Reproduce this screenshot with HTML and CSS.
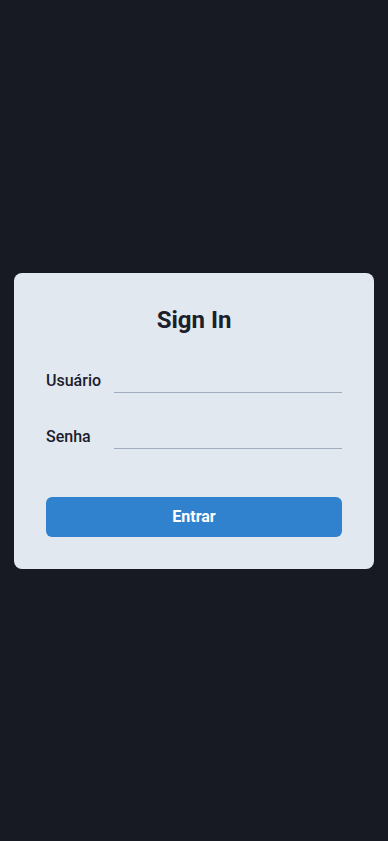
FILE: index.html
```html
<!DOCTYPE html>
<html lang="pt">
<head>
<meta charset="utf-8">
<title>Sign In</title>
<link rel="stylesheet" href="styles.css">
</head>
<body>
<main class="page">
  <form class="card">
    <h1 class="title">Sign In</h1>
    <div class="field">
      <label class="label" for="user">Usuário</label>
      <input class="input" id="user" type="text">
    </div>
    <div class="field">
      <label class="label" for="pass">Senha</label>
      <input class="input" id="pass" type="password">
    </div>
    <button class="button" type="button">Entrar</button>
  </form>
</main>
</body>
</html>
```
FILE: styles.css
```css
* { box-sizing: border-box; }
html, body { margin: 0; padding: 0; height: 100%; }
body {
  background: #171923;
  font-family: Roboto, "Liberation Sans", sans-serif;
  color: #1a202c;
}
.page {
  min-height: 100%;
  display: flex;
  align-items: center;
  justify-content: center;
  padding: 0 14px;
}
.card {
  width: 100%;
  background: #e2e8f0;
  border-radius: 8px;
  padding: 32px;
  display: flex;
  flex-direction: column;
}
.title {
  margin: 0 0 26px;
  font-size: 24px;
  line-height: 30px;
  font-weight: 700;
  text-align: center;
}
.field {
  display: grid;
  grid-template-columns: 68px 1fr;
  align-items: center;
  height: 32px;
  margin-bottom: 24px;
}
.field + .field { margin-bottom: 48px; }
.label {
  font-size: 16px;
  font-weight: 500;
  padding-top: 8px;
}
.input {
  height: 32px;
  border: none;
  border-bottom: 1px solid #a0aec0;
  background: transparent;
  outline: none;
  font: inherit;
  padding: 0;
}
.button {
  height: 40px;
  border: none;
  border-radius: 6px;
  background: #3182ce;
  color: #fff;
  font-family: inherit;
  font-size: 16px;
  font-weight: 700;
}
```
